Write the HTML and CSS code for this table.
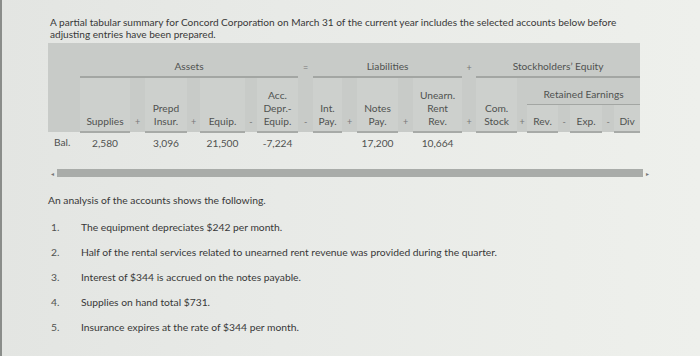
FILE: index.html
```html
<!DOCTYPE html>
<html>
<head>
<meta charset="utf-8">
<link rel="stylesheet" href="styles.css">
</head>
<body>
<div class="page">
  <p class="intro">A partial tabular summary for Concord Corporation on March 31 of the current year includes the selected accounts below before<br>adjusting entries have been prepared.</p>

  <table class="summary">
    <colgroup>
      <col style="width:32px"><col style="width:50px"><col style="width:15px"><col style="width:42px"><col style="width:13px"><col style="width:45px"><col style="width:12px"><col style="width:41px"><col style="width:15px"><col style="width:29px"><col style="width:15px"><col style="width:41px"><col style="width:15px"><col style="width:49px"><col style="width:14px"><col style="width:41px"><col style="width:10px"><col style="width:31px"><col style="width:12px"><col style="width:32px"><col style="width:12px"><col style="width:26px">
    </colgroup>
    <thead>
      <tr class="r1">
        <th class="blank"></th>
        <th class="group" colspan="7">Assets</th>
        <th class="op">=</th>
        <th class="group" colspan="5">Liabilities</th>
        <th class="op">+</th>
        <th class="group" colspan="7">Stockholders’ Equity</th>
      </tr>
      <tr class="r2">
        <th class="blank" rowspan="2"></th>
        <th class="acct" rowspan="2">Supplies</th>
        <th class="op low" rowspan="2">+</th>
        <th class="acct" rowspan="2">Prepd<br>Insur.</th>
        <th class="op low" rowspan="2">+</th>
        <th class="acct" rowspan="2">Equip.</th>
        <th class="op low" rowspan="2">-</th>
        <th class="acct" rowspan="2">Acc.<br>Depr.-<br>Equip.</th>
        <th class="op low" rowspan="2">-</th>
        <th class="acct" rowspan="2">Int.<br>Pay.</th>
        <th class="op low" rowspan="2">+</th>
        <th class="acct" rowspan="2">Notes<br>Pay.</th>
        <th class="op low" rowspan="2">+</th>
        <th class="acct" rowspan="2">Unearn.<br>Rent<br>Rev.</th>
        <th class="op low" rowspan="2">+</th>
        <th class="acct" rowspan="2">Com.<br>Stock</th>
        <th class="op low" rowspan="2">+</th>
        <th class="group sub" colspan="5">Retained Earnings</th>
      </tr>
      <tr class="r3">
        <th class="acct">Rev.</th>
        <th class="op low">-</th>
        <th class="acct">Exp.</th>
        <th class="op low">-</th>
        <th class="acct">Div</th>
      </tr>
    </thead>
    <tbody>
      <tr class="bal">
        <td class="lbl">Bal.</td>
        <td>2,580</td><td></td>
        <td>3,096</td><td></td>
        <td>21,500</td><td></td>
        <td>-7,224</td><td></td>
        <td></td><td></td>
        <td>17,200</td><td></td>
        <td>10,664</td><td></td>
        <td></td><td></td>
        <td></td><td></td>
        <td></td><td></td>
        <td></td>
      </tr>
    </tbody>
  </table>

  <div class="scroller">
    <span class="arrow">◂</span>
    <div class="track"></div>
    <span class="arrow">▸</span>
  </div>

  <p class="analysis">An analysis of the accounts shows the following.</p>

  <ol class="items">
    <li><span class="num">1.</span><span>The equipment depreciates $242 per month.</span></li>
    <li><span class="num">2.</span><span>Half of the rental services related to unearned rent revenue was provided during the quarter.</span></li>
    <li><span class="num">3.</span><span>Interest of $344 is accrued on the notes payable.</span></li>
    <li><span class="num">4.</span><span>Supplies on hand total $731.</span></li>
    <li><span class="num">5.</span><span>Insurance expires at the rate of $344 per month.</span></li>
  </ol>
</div>
</body>
</html>
```

FILE: styles.css
```css
html, body {
  margin: 0;
  padding: 0;
}

body {
  width: 700px;
  height: 356px;
  overflow: hidden;
  background: linear-gradient(90deg, #e3e5e2 0%, #e8eae7 40%, #eceeea 80%, #eef0ec 100%);
  font-family: Lato, "Open Sans", sans-serif;
  font-size: 10px;
  color: #444;
  border-left: 2px solid #8a8d8a;
  box-sizing: border-box;
}

.intro {
  margin: 0;
  padding: 16px 0 0 48px;
  font-size: 10.1px;
  line-height: 12px;
  color: #383838;
}

.summary {
  margin: 3px 0 0 46px;
  width: 592px;
  table-layout: fixed;
  border-collapse: collapse;
}

.summary th {
  font-weight: normal;
  color: #505250;
  font-size: 10.2px;
  line-height: 13px;
  padding: 0;
  text-align: center;
  vertical-align: bottom;
}

.summary thead {
  background: #c8cbc8;
}

.r1 th {
  height: 34px;
  padding-bottom: 3px;
  box-sizing: border-box;
}

.r1 .group {
  border-bottom: 2px solid #a3a6a3;
  padding-top: 15px;
}

.r2 .group.sub {
  border-bottom: 1px solid #a3a6a3;
  padding: 10px 0 3px;
}

.summary .op {
  font-size: 9px;
  color: #777;
}

.summary .op.low {
  padding-bottom: 4px;
}

.summary .acct {
  background: #cdd0cd;
  border-bottom: 2px solid #a7aaa7;
  padding-bottom: 3px;
}

.r3 th {
  height: 23px;
}

.bal td {
  height: 24px;
  box-sizing: border-box;
  padding: 4px 0 0;
  text-align: center;
  vertical-align: top;
  font-size: 10.2px;
  line-height: 13px;
  color: #505250;
}

.bal .lbl {
  text-align: left;
  padding-left: 6px;
}

.scroller {
  display: flex;
  align-items: center;
  margin: 13px 0 0 49px;
  width: 598px;
  gap: 3px;
}

.arrow {
  font-size: 6px;
  color: #777;
}

.track {
  flex: 1;
  height: 8px;
  background: #a9aca9;
}

.analysis {
  margin: 17px 0 0 46px;
  font-size: 10.3px;
  line-height: 13px;
  color: #383838;
}

.items {
  list-style: none;
  margin: 14px 0 0;
  padding: 0;
  display: flex;
  flex-direction: column;
  gap: 12px;
}

.items li {
  display: flex;
  font-size: 10.3px;
  line-height: 13px;
  color: #383838;
}

.items .num {
  width: 30px;
  padding-left: 49px;
  color: #505250;
}
```
